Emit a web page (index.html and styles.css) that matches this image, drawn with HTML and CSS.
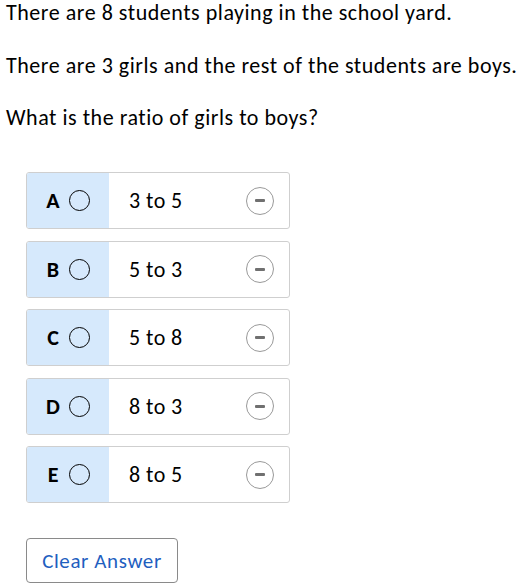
FILE: index.html
```html
<!DOCTYPE html>
<html>
<head>
<meta charset="utf-8">
<link rel="stylesheet" href="styles.css">
</head>
<body>
<div class="question">
  <p class="stem">There are 8 students playing in the school yard.</p>
  <p class="stem">There are 3 girls and the rest of the students are boys.</p>
  <p class="stem">What is the ratio of girls to boys?</p>
</div>
<div class="options">
  <div class="option">
    <div class="key"><span class="letter">A</span><span class="radio"></span></div>
    <div class="text">3 to 5</div>
    <span class="strike"><span class="bar"></span></span>
  </div>
  <div class="option">
    <div class="key"><span class="letter">B</span><span class="radio"></span></div>
    <div class="text">5 to 3</div>
    <span class="strike"><span class="bar"></span></span>
  </div>
  <div class="option">
    <div class="key"><span class="letter">C</span><span class="radio"></span></div>
    <div class="text">5 to 8</div>
    <span class="strike"><span class="bar"></span></span>
  </div>
  <div class="option">
    <div class="key"><span class="letter">D</span><span class="radio"></span></div>
    <div class="text">8 to 3</div>
    <span class="strike"><span class="bar"></span></span>
  </div>
  <div class="option">
    <div class="key"><span class="letter">E</span><span class="radio"></span></div>
    <div class="text">8 to 5</div>
    <span class="strike"><span class="bar"></span></span>
  </div>
</div>
<button class="clear">Clear Answer</button>
</body>
</html>
```
FILE: styles.css
```css
html, body {
  margin: 0;
  padding: 0;
  background: #fff;
}
body {
  padding-left: 6px;
  padding-top: 1px;
  font-family: Carlito, Calibri, "Open Sans", sans-serif;
  color: #000;
}
.question {
  display: flex;
  flex-direction: column;
  gap: 28.5px;
}
.stem {
  margin: 0;
  font-size: 22px;
  letter-spacing: 0.53px;
  line-height: 24px;
}
.options {
  margin-top: 42px;
  margin-left: 20px;
  display: flex;
  flex-direction: column;
  gap: 11.5px;
  width: 264px;
}
.option {
  height: 57px;
  box-sizing: border-box;
  border: 1px solid #cfcfcf;
  border-radius: 3px;
  display: flex;
  align-items: center;
  overflow: hidden;
}
.key {
  width: 82px;
  height: 100%;
  background: #d6e9fc;
  display: flex;
  align-items: center;
  justify-content: center;
  gap: 9px;
}
.letter {
  font-weight: bold;
  font-size: 22px;
  width: 14px;
  text-align: center;
}
.radio {
  width: 19px;
  height: 19px;
  border: 1.8px solid #000;
  border-radius: 50%;
}
.text {
  flex: 1;
  padding-left: 20px;
  font-size: 22px;
  letter-spacing: 0.45px;
}
.strike {
  width: 26px;
  height: 26px;
  border: 1px solid #999;
  border-radius: 50%;
  margin-right: 15px;
  display: flex;
  align-items: center;
  justify-content: center;
}
.bar {
  width: 10px;
  height: 3px;
  background: #707070;
  border-radius: 1px;
}
.clear {
  margin-top: 35px;
  margin-left: 20px;
  width: 152px;
  height: 45px;
  background: #fff;
  border: 1px solid #8a8a8a;
  border-radius: 4px;
  font-family: Carlito, Calibri, "Open Sans", sans-serif;
  font-size: 21px;
  letter-spacing: 0.6px;
  color: #1f5fbf;
  padding: 0;
}
```
